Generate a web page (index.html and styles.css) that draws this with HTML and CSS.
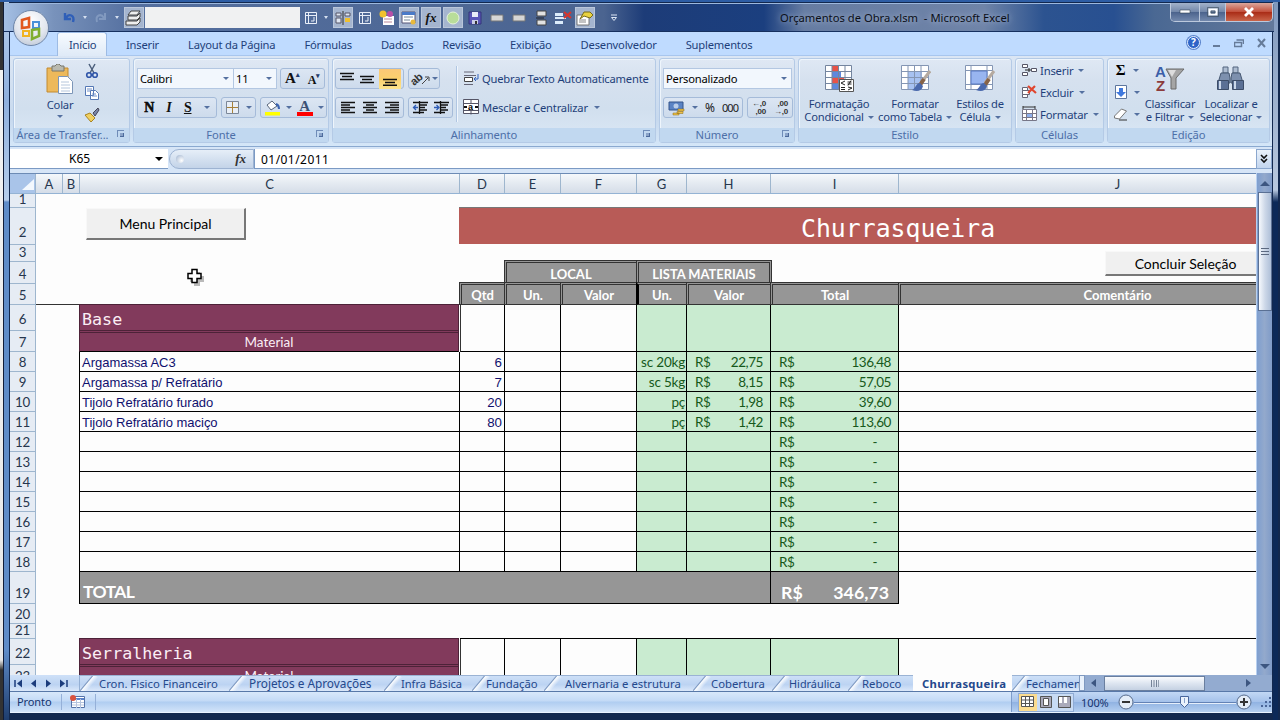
FILE: index.html
```html
<!DOCTYPE html>
<html lang="pt-BR">
<head>
    <meta charset="UTF-8">
    <title>Orçamentos de Obra.xlsm - Microsoft Excel</title>
    <link rel="stylesheet" href="styles.css">
</head>
<body>
<div class="window">
    <!-- Office button -->
    <div class="orb">
        <svg width="26" height="26" viewBox="0 0 26 26" fill="none" stroke-width="2.6">
            <path d="M4 5l7-2v9l-7 1z" stroke="#e2571e"/>
            <path d="M15 7h6v6h-6z" stroke="#4b8fd8" stroke-width="2"/>
            <path d="M5 16h6v5H5z" stroke="#f0b323" stroke-width="2"/>
            <path d="M14 15l7-1v7l-7 3z" stroke="#7fae2f"/>
        </svg>
    </div>

    <div class="titlebar">
        <div class="quick">
            <span class="q undo"><svg width="16" height="16"><path d="M4 3v6h6M5 8c3-5 9-3 7 4" fill="none" stroke="#2f5fb8" stroke-width="2.400"/></svg></span>
            <span class="caret light"></span>
            <span class="q redo"><svg width="16" height="16"><path d="M12 3v6H6M11 8C8 3 2 5 4 12" fill="none" stroke="#8199bf" stroke-width="2"/></svg></span>
            <span class="caret light"></span>
            <span class="q on"><svg width="18" height="16" fill="#eee" stroke="#444"><path d="M6 1h9l-3 4H3zM3 6h9l3-3v4l-3 3H3zM1 11h11l3-3v4l-3 3H1z"/></svg></span>
        </div>
        <div class="blank-box"></div>
        <div class="tools">
            <span class="q"><svg width="16" height="16"><path d="M2.500 2.500h11v11h-11zM2.500 5.500h11M5.500 2.500v11M8 11h3V7" fill="none" stroke="#e8eef8"/></svg></span>
            <span class="caret light"></span>
            <span class="q on"><svg width="16" height="16"><path d="M1 3h5v3H1zM10 3h5v3h-5zM1 8h5v5H1z" fill="#dfe6f2" stroke="#556"/><path d="M10 8h5v4h-5z" fill="#f0c030"/><path d="M8 1v14" stroke="#333"/></svg></span>
            <span class="q"><svg width="16" height="16"><path d="M2.500 2.500h11v11h-11zM2.500 5.500h11M5.500 2.500v11M8 11h3V7" fill="none" stroke="#e8eef8"/></svg></span>
            <span class="q"><svg width="16" height="16"><path d="M4 6h11v9H4z" fill="#fff"/><circle cx="4" cy="4" r="3.500" fill="#f2c22e"/><circle cx="11" cy="4" r="3" fill="#b84fa8"/><path d="M5 9h8M5 12h8" stroke="#b89"/></svg></span>
            <span class="q on"><svg width="16" height="16"><path d="M1 2h13v11H1z" fill="#fff" stroke="#557"/><path d="M1 2h13v3H1z" fill="#4a7ac8"/><path d="M3 7h9M3 10h6" stroke="#789"/><circle cx="12" cy="12" r="2.500" fill="#e8b93c"/></svg></span>
            <span class="q on fx-icon">fx</span>
            <span class="q on"><svg width="16" height="16"><circle cx="8" cy="8" r="6" fill="#b9dd9a" stroke="#e5f3da"/></svg></span>
            <span class="q"><svg width="16" height="16"><path d="M2 2h12v12H2z" fill="#5a55b8" stroke="#34357a"/><path d="M5 2h6v5H5z" fill="#e9ecf8"/><path d="M5 10h6v4H5z" fill="#c9cce6"/><path d="M8 11h2v3H8z" fill="#333"/></svg></span>
            <span class="q"><svg width="16" height="16"><path d="M2 5h12v6H2z" fill="#d6d6d6" stroke="#777"/></svg></span>
            <span class="q"><svg width="16" height="16"><path d="M2 5h12v6H2z" fill="#d6d6d6" stroke="#777"/></svg></span>
            <span class="q"><svg width="16" height="16"><path d="M4 1h9v5H4zM4 10h9v5H4z" fill="#e2e2e2" stroke="#444"/><path d="M3 8h8" stroke="#222"/></svg></span>
            <span class="q"><svg width="18" height="16"><path d="M1 3h8v3H1zM1 7h11v2H1zM1 11h8v3H1z" fill="#dcecfb"/><path d="M10 2l7 6M17 2l-7 6" stroke="#d9342b" stroke-width="2"/></svg></span>
            <span class="q on"><svg width="18" height="16"><path d="M1 5h12v10H1z" fill="#fff" stroke="#777"/><path d="M8 2h6l3 3-3 3-6-2-4 3z" fill="#e9d23f" stroke="#776a1c"/><path d="M3 10h7M3 12h7" stroke="#888"/></svg></span>
        </div>
        <svg class="more" width="8" height="8"><path d="M1 1h6M1.500 3.500h5l-2.500 3z" fill="none" stroke="#dce6f5"/></svg>
        <div class="title">Orçamentos de Obra.xlsm&nbsp; - Microsoft Excel</div>
        <div class="winbtns">
            <span class="wb min"><svg width="12" height="6"><path d="M1 1h10v3H1z" fill="#fff" stroke="#345" stroke-width=".6"/></svg></span>
            <span class="wb max"><svg width="12" height="10"><path d="M2.500 2.500h7v5h-7z" fill="none" stroke="#fff" stroke-width="2.200"/><path d="M.5.5h11v9H.5zM4 4h4v2H4z" fill="none" stroke="#456" stroke-width=".7"/></svg></span>
            <span class="wb close"><svg width="12" height="10"><path d="M2 1l8 8M10 1L2 9" stroke="#fff" stroke-width="2.800"/></svg></span>
        </div>
    </div>

    <div class="tabs">
        <span class="tab active">Início</span>
        <span class="tab">Inserir</span>
        <span class="tab">Layout da Página</span>
        <span class="tab">Fórmulas</span>
        <span class="tab">Dados</span>
        <span class="tab">Revisão</span>
        <span class="tab">Exibição</span>
        <span class="tab">Desenvolvedor</span>
        <span class="tab">Suplementos</span>
        <div class="docbtns">
            <span class="help">?</span>
            <svg width="8" height="12"><path d="M0 9h7" stroke="#667b99" stroke-width="2"/></svg>
            <svg width="10" height="12"><path d="M2.500 3h7v4M.5 5.500h7v4h-7z" fill="none" stroke="#667b99" stroke-width="1.500"/></svg>
            <svg width="10" height="12"><path d="M1 2l7 8M8 2l-7 8" stroke="#667b99" stroke-width="2"/></svg>
        </div>
    </div>

    <div class="ribbon">
        <div class="group g-clip">
            <div class="body">
                <div class="big paste">
                    <svg width="28" height="32"><path d="M1 4h21v24H1z" fill="#edb95b" stroke="#c28a30"/><path d="M6 2h3l2-2h2l2 2h3v5H6z" fill="#b9b9ae" stroke="#77776c"/><path d="M12.500 12.500h9l5 5v12h-14z" fill="#fff" stroke="#7d96b8"/><path d="M15 18h8M15 21h9M15 24h9M15 27h9" stroke="#b5c6dc"/></svg>
                    <span>Colar</span>
                    <i class="caret"></i>
                </div>
                <div class="stack">
                    <svg width="16" height="16"><path d="M5 1l5 9M11 1L6 10" stroke="#4c5f7c" stroke-width="1.500"/><circle cx="5" cy="12" r="2.300" fill="none" stroke="#2f55a8" stroke-width="1.600"/><circle cx="11" cy="12" r="2.300" fill="none" stroke="#2f55a8" stroke-width="1.600"/></svg>
                    <svg width="16" height="16"><path d="M1.500 1.500h8v9h-8zM6.500 5.500h5l3 3v6h-8z" fill="#fff" stroke="#5578b5"/><path d="M3 4h5M3 6h3M8 9h4M8 11h5" stroke="#6e8fc8"/></svg>
                    <svg width="16" height="16"><path d="M9 6l5-5 1 2-4 6z" fill="#7a86a8" stroke="#445"/><path d="M1 8l5-2 5 5-4 4z" fill="#f0d060" stroke="#a98322"/></svg>
                </div>
            </div>
            <div class="label"><span>Área de Transfer...</span><i class="launch"></i></div>
        </div>

        <div class="group g-font">
            <div class="body rows">
                <div class="row">
                    <span class="combo w96">Calibri<i class="caret"></i></span>
                    <span class="combo w42">11<i class="caret"></i></span>
                    <span class="set fsize"><b class="a1">A<sup>&#9652;</sup></b><b class="a2">A<sup>&#9662;</sup></b></span>
                </div>
                <div class="row">
                    <span class="set nis"><b>N</b><em>I</em><u>S</u><i class="caret"></i></span>
                    <span class="set w34"><svg width="15" height="15"><path d="M1.500 1.500h12v12h-12z" fill="#e9eff7" stroke="#7b8798"/><path d="M2 7.500h11M7.500 2v11" stroke="#a8823a"/></svg><i class="caret"></i></span>
                    <span class="set w66">
                        <svg width="17" height="17"><path d="M3 6l5-4 5 5-6 4z" fill="#fff" stroke="#59677c"/><path d="M12 5c3 1 3 4 3 5" stroke="#3c64b0" fill="none" stroke-width="2"/><path d="M1 13h15v3.500H1z" fill="#ff0"/></svg><i class="caret"></i>
                        <span class="fcolor">A</span><i class="caret"></i>
                    </span>
                </div>
            </div>
            <div class="label"><span>Fonte</span><i class="launch"></i></div>
        </div>

        <div class="group g-align">
            <div class="body">
                <div class="rows">
                    <div class="row">
                        <span class="set w68">
                            <svg width="15" height="15"><path d="M1 2.500h14M3 5.500h10M1 8.500h14" stroke="#111" stroke-width="1.500"/></svg>
                            <svg width="15" height="15"><path d="M1 5.500h14M3 8.500h10M1 11.500h14" stroke="#111" stroke-width="1.500"/></svg>
                            <span class="hot"><svg width="15" height="15"><path d="M1 8.500h14M3 11.500h10M1 14.200h14" stroke="#111" stroke-width="1.500"/></svg></span>
                        </span>
                        <span class="set w32"><span class="ab">ab</span><svg class="abarr" width="9" height="12"><path d="M1 11l6-6M4 4h4v4" fill="none" stroke="#444"/></svg><i class="caret"></i></span>
                    </div>
                    <div class="row">
                        <span class="set w68">
                            <svg width="15" height="15"><path d="M1 2.500h14M1 5h9M1 7.500h14M1 10h9M1 12.500h14" stroke="#111" stroke-width="1.300"/></svg>
                            <svg width="15" height="15"><path d="M1 2.500h14M4 5h8M1 7.500h14M4 10h8M1 12.500h14" stroke="#111" stroke-width="1.300"/></svg>
                            <svg width="15" height="15"><path d="M1 2.500h14M6 5h9M1 7.500h14M6 10h9M1 12.500h14" stroke="#111" stroke-width="1.300"/></svg>
                        </span>
                        <span class="set w44">
                            <svg width="16" height="15"><path d="M1 2.500h15M8 5h7M8 7.500h5M8 10h7M1 12.500h11M7.500 1v13" stroke="#111" stroke-width="1.300"/><path d="M6 7.500H2M4 5L1.500 7.500 4 10" fill="none" stroke="#2d5bb5" stroke-width="1.300"/></svg>
                            <svg width="16" height="15"><path d="M1 2.500h15M8 5h7M8 7.500h5M8 10h7M1 12.500h11M7.500 1v13" stroke="#111" stroke-width="1.300"/><path d="M1 7.500h4M3.500 5L6 7.500 3.500 10" fill="none" stroke="#2d5bb5" stroke-width="1.300"/></svg>
                        </span>
                    </div>
                </div>
                <div class="wraps">
                    <div class="line"><svg width="16" height="16"><path d="M1 2h10M1 5.500h12M1 14.500h9" stroke="#667"/><path d="M1.500 7.500h8v4h-8z" fill="#fff" stroke="#444"/><path d="M15 4v5h-3M13 7l-2 2 2 2" fill="none" stroke="#3565bd"/></svg><span>Quebrar Texto Automaticamente</span></div>
                    <div class="line"><svg width="16" height="16"><path d="M.5.5h15v14H.5zM.5 4.500h15M.5 11.500h15M8 .5v4M8 11.500v4" fill="#fff" stroke="#556"/><path d="M1 8h3M12 8h3" stroke="#111" stroke-width="2"/><text x="5" y="10.5" class="cell-a">a</text></svg><span>Mesclar e Centralizar</span><i class="caret"></i></div>
                </div>
            </div>
            <div class="label"><span>Alinhamento</span><i class="launch"></i></div>
        </div>

        <div class="group g-num">
            <div class="body rows">
                <div class="row"><span class="combo w128">Personalizado<i class="caret"></i></span></div>
                <div class="row">
                    <span class="set w80"><svg width="17" height="16"><path d="M1 2h14v8H1z" fill="#5a83c4" stroke="#34548a"/><circle cx="8" cy="6" r="2.500" fill="#b9cdea"/><path d="M10 9h6v2h-6zM9 11.500h6v2H9zM5 13h6v2H5z" fill="#edc248" stroke="#8d6b17" stroke-width=".5"/></svg><i class="caret"></i><span class="pct">%</span><span class="zeros">000</span></span>
                    <span class="set w45"><span class="dec">&#8592;,0<br>,00</span><span class="dec">,00<br>&#8594;,0</span></span>
                </div>
            </div>
            <div class="label"><span>Número</span><i class="launch"></i></div>
        </div>

        <div class="group g-style">
            <div class="body">
                <div class="big w76">
                    <svg width="32" height="30"><path d="M2.500 1.500h26v24h-26z" fill="#fff"/><path d="M9 1h6v6H9zM9 13h12v6H9z" fill="#e85348"/><path d="M9 7h9v6H9zM9 19h8v6H9z" fill="#5e88dd"/><path d="M2.500 1.500h26v24h-26zM9 1v25M15.500 1v25M22 1v25M2 7.500h27M2 13.500h27M2 19.500h27" fill="none" stroke="#74859f"/><path d="M16.500 15.500h14v12h-14z" fill="#fff" stroke="#555"/><path d="M22 17l-4 2 4 2M18 23.500h4M18 25.500h4M24.500 18h4M24.500 20h4M28 16.500l-3 5M25 23l4 1-4 2" fill="none" stroke="#222"/></svg>
                    <span>Formatação</span><span>Condicional<i class="caret"></i></span>
                </div>
                <div class="big w76">
                    <svg width="32" height="30"><path d="M2.500 1.500h27v24h-27z" fill="#fff"/><path d="M9 7h14v18H9z" fill="#a7c2f2"/><path d="M2.500 1.500h27v24h-27zM9 1v25M15.500 1v25M22 1v25M2 7.500h27M2 13.500h27M2 19.500h27" fill="none" stroke="#8496b4"/><path d="M31 7l-9 12" stroke="#b5aaa0" stroke-width="3"/><path d="M25 15l-4 6" stroke="#876347" stroke-width="4"/><path d="M21 19c-4 0-4 5-8 7 5 2 10 1 11-4z" fill="#4a69ad"/></svg>
                    <span>Formatar</span><span>como Tabela<i class="caret"></i></span>
                </div>
                <div class="big w54">
                    <svg width="32" height="30"><path d="M1.500 1.500h27v24h-27z" fill="#fff" stroke="#8496b4"/><path d="M7 1v25M23 1v25M1 6.500h28M1 20.500h28" stroke="#8496b4"/><path d="M7 7h16v13H7z" fill="#98b5f0" stroke="#5878c0"/><path d="M30 7l-9 12" stroke="#b5aaa0" stroke-width="3"/><path d="M25 15l-4 6" stroke="#876347" stroke-width="4"/><path d="M20 19c-4 0-4 5-8 7 5 2 10 1 11-4z" fill="#4a69ad"/></svg>
                    <span>Estilos de</span><span>Célula<i class="caret"></i></span>
                </div>
            </div>
            <div class="label"><span>Estilo</span></div>
        </div>

        <div class="group g-cells">
            <div class="body list">
                <div class="line"><svg width="17" height="16"><path d="M1.500 2.500h5v3h-5zM1.500 10.500h5v3h-5zM10.500 6.500h5v3h-5z" fill="#fff" stroke="#556"/><path d="M4 8h6M8 6v4" stroke="#222"/></svg><span>Inserir</span><i class="caret"></i></div>
                <div class="line"><svg width="17" height="16"><path d="M1.500 3.500h5v3h-5zM1.500 10.500h5v3h-5zM1.500 6.500h7v4h-7z" fill="#fff" stroke="#667"/><path d="M7 2l8 7M14 2L7 9" stroke="#e0452e" stroke-width="2.200"/></svg><span>Excluir</span><i class="caret"></i></div>
                <div class="line"><svg width="17" height="16"><path d="M1.500 3.500h14v11h-14zM1.500 7.500h14M1.500 11.500h14M5.500 3v12M11.500 3v12" fill="#fff" stroke="#778"/><path d="M6 8h5v3H6z" fill="#8fb0ec"/><path d="M2 1h12M2 0v3M14 0v3" stroke="#333"/></svg><span>Formatar</span><i class="caret"></i></div>
            </div>
            <div class="label"><span>Células</span></div>
        </div>

        <div class="group g-edit">
            <div class="body">
                <div class="list edit-list">
                    <div class="line"><span class="sigma">Σ</span><i class="caret"></i></div>
                    <div class="line"><svg width="16" height="16"><path d="M2.500 1.500h11v13h-11z" fill="#fff" stroke="#5c769f"/><path d="M6 4h4v4h3l-5 5-5-5h3z" fill="#3f78dd"/></svg><i class="caret"></i></div>
                    <div class="line"><svg width="16" height="16"><path d="M1.500 10l7-7 5 2-7 8-5-1z" fill="#fff" stroke="#777"/><path d="M6 14h8" stroke="#333"/></svg><i class="caret"></i></div>
                </div>
                <div class="big w58">
                    <svg width="32" height="30"><path d="M12 5h18l-8 9v11h-5V14z" fill="#a5a5a5" stroke="#6b6b6b"/><path d="M14 6h8l-4 7" fill="#ddd"/><text x="1" y="13" class="az" fill="#3c5fa8">A</text><text x="2" y="27" class="az" fill="#8c3b3b">Z</text></svg>
                    <span>Classificar</span><span>e Filtrar<i class="caret"></i></span>
                </div>
                <div class="big w64">
                    <svg width="32" height="30"><path d="M8 3h5v6H8zM18 3h5v6h-5z" fill="#aebdd2" stroke="#53647e"/><path d="M6 9h8l1 5v5H3zM17 9h8l3 10H16v-5z" fill="#7d90ae" stroke="#475872"/><path d="M2.500 16.500h11v9h-11zM17.500 16.500h11v9h-11z" fill="#5b7095" stroke="#3d4d68"/><path d="M5 17v8M20 17v8" stroke="#cbd8ea" stroke-width="2"/></svg>
                    <span>Localizar e</span><span>Selecionar<i class="caret"></i></span>
                </div>
            </div>
            <div class="label"><span>Edição</span></div>
        </div>
    </div>

    <div class="formula">
        <div class="namebox"><span>K65</span><i class="caret black"></i></div>
        <div class="fxarea"><i class="knob"></i><span class="fx">fx</span></div>
        <div class="value">01/01/2011</div>
        <div class="expand"><svg width="8" height="10"><path d="M1 1l3 3 3-3M1 5l3 3 3-3" fill="none" stroke="#111" stroke-width="1.600"/></svg></div>
    </div>

    <div class="main">
        <div class="sheet">
            <div class="r heads">
                <div class="corner"><svg width="16" height="12"><path d="M15 0v11H3z" fill="#f3f8fe"/></svg></div>
                <div>A</div><div>B</div><div>C</div><div>D</div><div>E</div><div>F</div><div>G</div><div>H</div><div>I</div><div class="wide">J</div>
            </div>
            <div class="r h1"><div class="n">1</div></div>
            <div class="r h2"><div class="n">2</div><div class="banner">Churrasqueira</div></div>
            <div class="r h3"><div class="n">3</div></div>
            <div class="r h4"><div class="n">4</div><div class="gh local">LOCAL</div><div class="gh lista">LISTA MATERIAIS</div></div>
            <div class="r h5"><div class="n">5</div><div class="under"></div>
                <div class="gh">Qtd</div><div class="gh">Un.</div><div class="gh">Valor</div><div class="gh thick">Un.</div><div class="gh">Valor</div><div class="gh">Total</div><div class="gh wide">Comentário</div>
            </div>
            <div class="r h6"><div class="n">6</div><div class="sec">Base</div><div class="c first"></div><div class="c"></div><div class="c"></div><div class="c g"></div><div class="c g"></div><div class="c g"></div></div>
            <div class="r h7"><div class="n">7</div><div class="mat">Material</div><div class="c first"></div><div class="c"></div><div class="c"></div><div class="c g"></div><div class="c g"></div><div class="c g"></div><div class="c last"></div></div>
            <div id="items"></div>
            <div class="r h19"><div class="n">19</div><div class="total">TOTAL</div><div class="sum"><span>R$</span><span>346,73</span></div></div>
            <div class="r h20"><div class="n">20</div></div>
            <div class="r h21"><div class="n">21</div><div class="topline"></div></div>
            <div class="r h6"><div class="n">22</div><div class="sec">Serralheria</div><div class="c first"></div><div class="c"></div><div class="c"></div><div class="c g"></div><div class="c g"></div><div class="c g"></div></div>
            <div class="r h7"><div class="n">23</div><div class="mat">Material</div><div class="c first"></div><div class="c"></div><div class="c"></div><div class="c g"></div><div class="c g"></div><div class="c g"></div><div class="c last"></div></div>

            <div class="xl-btn menu">Menu Principal</div>
            <div class="xl-btn done">Concluir Seleção</div>
            <svg class="cursor" width="22" height="22"><path d="M8 5h6v4h4v6h-4v4H8v-4H4V9h4z" fill="#777" opacity=".5"/><path d="M6 2.500h5v4h4v5h-4v4H6v-4H2v-5h4z" fill="#fff" stroke="#000" stroke-width="1.500"/></svg>
        </div>
        <div class="vscroll">
            <i class="up"></i>
            <div class="thumb"><svg width="8" height="7"><path d="M0 .5h8M0 3.500h8M0 6.500h8" stroke="#5b6980"/></svg></div>
            <i class="down"></i>
        </div>
    </div>

    <div class="sheettabs">
        <div class="nav">
            <svg width="10" height="9"><path d="M1 1v7" stroke="#1c3c7c" stroke-width="1.500"/><path d="M8 .5v8l-5-4z" fill="#1c3c7c"/></svg>
            <svg width="10" height="9"><path d="M7 .5v8l-5-4z" fill="#1c3c7c"/></svg>
            <svg width="10" height="9"><path d="M2 .5v8l5-4z" fill="#1c3c7c"/></svg>
            <svg width="10" height="9"><path d="M8 1v7" stroke="#1c3c7c" stroke-width="1.500"/><path d="M1 .5v8l5-4z" fill="#1c3c7c"/></svg>
        </div>
        <div class="st s1">Cron. Fisico Financeiro</div>
        <div class="st s2">Projetos e Aprovações</div>
        <div class="st s3">Infra Básica</div>
        <div class="st s4">Fundação</div>
        <div class="st s5">Alvernaria e estrutura</div>
        <div class="st s6">Cobertura</div>
        <div class="st s7">Hidráulica</div>
        <div class="st s8">Reboco</div>
        <div class="st current">Churrasqueira</div>
        <div class="st s9">Fechamento</div>
        <div class="split"></div>
        <div class="hscroll">
            <i class="left"></i>
            <div class="hthumb"><svg width="8" height="7"><path d="M.5 0v7M3 0v7M5.500 0v7M7.800 0v7" stroke="#5b6980" stroke-width=".8"/></svg></div>
            <i class="right"></i>
        </div>
    </div>

    <div class="status">
        <span class="ready">Pronto</span>
        <span class="macro"><svg width="17" height="14"><path d="M2.500 1.500h13v11h-13z" fill="#fff" stroke="#5573a8"/><path d="M3 4h12" stroke="#5b82c8" stroke-width="2"/><path d="M3 7.500h12M3 10h12M7.500 4v9M11.500 4v9" stroke="#b5c4de"/><circle cx="4" cy="3" r="3" fill="#d8523e"/></svg></span>
        <div class="controls">
            <div class="views">
                <span class="v sel"><svg width="14" height="12"><path d="M.5.5h12v10H.5zM.5 4h12M.5 7.500h12M4.500.5v10M8.500.5v10" fill="#fff" stroke="#555"/></svg></span>
                <span class="v"><svg width="13" height="12"><path d="M.5.5h11v11H.5z" fill="#aab" stroke="#555"/><path d="M3.500 2.500h5v7h-5z" fill="#fff" stroke="#555"/></svg></span>
                <span class="v"><svg width="13" height="12"><path d="M.5.5h12v11H.5z" fill="#aab" stroke="#555"/><path d="M1 1h3v6H1zM6 1h3v6H6z" fill="#fff"/></svg></span>
            </div>
            <span class="zoom">100%</span>
            <svg width="136" height="18">
                <path d="M17 9.500h102" stroke="#6382b5"/><path d="M17 10.500h102" stroke="#e6effb"/>
                <circle cx="9" cy="9" r="7" fill="#e4edf8" stroke="#566b8c"/><path d="M5 9h8" stroke="#333" stroke-width="2"/>
                <circle cx="127" cy="9" r="7" fill="#e4edf8" stroke="#566b8c"/><path d="M123 9h8M127 5v8" stroke="#333" stroke-width="2"/>
                <path d="M63.500 3.500h8v7l-4 4-4-4z" fill="#eaf2fc" stroke="#48669c"/><path d="M67.500 5v5" stroke="#8aa3cc"/>
            </svg>
            <svg class="grip" width="12" height="12"><path d="M9 1h2v2H9zM5 5h2v2H5zM9 5h2v2H9zM1 9h2v2H1zM5 9h2v2H5zM9 9h2v2H9z" fill="#4a6699"/></svg>
        </div>
    </div>
</div>

<script>
    const items = [
        ['Argamassa AC3', '6', 'sc 20kg', '22,75', '136,48'],
        ['Argamassa p/ Refratário', '7', 'sc 5kg', '8,15', '57,05'],
        ['Tijolo Refratário furado', '20', 'pç', '1,98', '39,60'],
        ['Tijolo Refratário maciço', '80', 'pç', '1,42', '113,60']
    ];
    let html = '';
    for (let i = 0; i < 11; i++) {
        const [name, qty, unit, price, total] = items[i] || ['', '', '', '', '-'];
        html += `<div class="r item"><div class="n">${i + 8}</div>
            <div class="c edge"></div><div class="c name">${name}</div><div class="c qty">${qty}</div>
            <div class="c"></div><div class="c"></div><div class="c g unit">${unit}</div>
            <div class="c g money">${price ? `<span>R$</span><span>${price}</span>` : ''}</div>
            <div class="c g money"><span>R$</span><span class="${total === '-' ? 'dash' : ''}">${total}</span></div>
            <div class="c last"></div></div>`;
    }
    document.getElementById('items').innerHTML = html;
</script>
</body>
</html>
```
FILE: styles.css
```css
* {
    box-sizing: border-box;
}
body {
    margin: 0;
    width: 1280px;
    height: 720px;
    overflow: hidden;
    font-family: "Noto Sans", "Open Sans", sans-serif;
    font-size: 11.5px;
    color: #1e3f7a;
    background: #12284e;
}
svg {
    display: block;
    flex: none;
}
.window {
    position: relative;
    width: 1280px;
    height: 720px;
    padding: 3px 8px 0 10px;
    background:
        linear-gradient(#2d5da5, #2d5da5) 0 0 / 100% 2px no-repeat,
        linear-gradient(#101c38, #101c38) 3px 0 / 1px 100% no-repeat,
        linear-gradient(#b7cdea, #8fb0de 100px, #b6cdea 200px, #5f8cc8 202px, #5f8cc8 650px, #1e3d6e) 4px 0 / 5px 100% no-repeat,
        linear-gradient(#7f98bd, #b8c8de 190px, #0c2958 202px, #0c2958) 1273px 0 / 5px 100% no-repeat,
        linear-gradient(#333 70px, #f2f2f2 70px, #e8e8e8 660px, #333 670px) 0 0 / 3px 100% no-repeat,
        #12284e;
}

/* title bar */
.titlebar {
    display: flex;
    align-items: center;
    height: 29px;
    margin: 0 -2px 0 -6px;
    padding-left: 55px;
    border-top: 1px solid #9db8dd;
    border-bottom: 1px solid #16305f;
    background: linear-gradient(90deg, #a4bfe4 0, #7892bb 50px, #546f9f 130px, #4b6490 600px, #1d3c78 640px, #1b3f7f 760px, #667ca2 800px, #6f84a8 980px, #2c5390 1040px, #285091 1110px, #4a6893 1150px, #63799b);
}
.orb {
    position: absolute;
    left: 13px;
    top: 10px;
    z-index: 2;
    width: 36px;
    height: 36px;
    border-radius: 50%;
    border: 1px solid #6f86a8;
    background: radial-gradient(circle at 50% 30%, #fff, #e2e6ee 55%, #b3bfd0);
    display: flex;
    align-items: center;
    justify-content: center;
}
.quick, .tools {
    display: flex;
    align-items: center;
}
.quick .caret {
    margin: 0 4px;
}
.q {
    width: 20px;
    height: 21px;
    margin: 0 1px;
    display: flex;
    align-items: center;
    justify-content: center;
}
.quick .q {
    width: 18px;
}
.q.on {
    background: #a5b5cf;
    border: 1px solid #b9c6da;
}
.quick .q.on {
    width: 20px;
    margin-left: 1px;
}
.fx-icon {
    font: italic bold 13px "Liberation Serif", serif;
    color: #111;
}
.blank-box {
    width: 155px;
    height: 21px;
    background: #f0f1f2;
}
.tools .caret {
    margin: 0 4px 0 2px;
}
.more {
    margin-left: 14px;
}
.title {
    position: absolute;
    left: 780px;
    top: 9px;
    width: 240px;
    color: #0b0f18;
    font-size: 11.2px;
    line-height: 17px;
    white-space: nowrap;
    letter-spacing: 0.02px;
    text-shadow: 0 0 6px #b8c6de;
}
.winbtns {
    position: absolute;
    right: 7px;
    top: 3px;
    display: flex;
    height: 19px;
    border: 1px solid #bcc9dd;
    border-top: 0;
    border-radius: 0 0 5px 5px;
    overflow: hidden;
}
.wb {
    display: flex;
    align-items: center;
    justify-content: center;
    border-right: 1px solid #bcc9dd;
    background: linear-gradient(#a2b2ca, #7388aa 48%, #4a628c 50%, #7288ac);
}
.min {
    width: 29px;
}
.max {
    width: 26px;
}
.close {
    width: 46px;
    border: 0;
    background: linear-gradient(#dba79c, #c3513d 48%, #a92a15 50%, #c9654a);
}

/* ribbon tabs */
.tabs {
    display: flex;
    height: 24px;
    padding-left: 47px;
    background: #bfdbff;
    border-bottom: 1px solid #a8c6ee;
}
.tab {
    height: 24px;
    padding: 0 14.5px;
    line-height: 25px;
    font-size: 11.2px;
    letter-spacing: -0.2px;
    white-space: nowrap;
}
.tab.active {
    padding: 0 10px 0 11px;
    margin-right: 4px;
    background: linear-gradient(#f7fbff, #dfeaf7);
    border: 1px solid #9dbbe4;
    border-bottom: 0;
    border-radius: 3px 3px 0 0;
    line-height: 23px;
}
.docbtns {
    display: flex;
    align-items: center;
    gap: 13px;
    margin-left: auto;
    padding-right: 5px;
    margin-top: -2px;
}
.help {
    width: 13px;
    height: 13px;
    border-radius: 50%;
    background: #2e64c8;
    border: 1px solid #e4efff;
    box-shadow: 0 0 0 1px #5b84cc;
    color: #fff;
    font-size: 10px;
    font-weight: bold;
    line-height: 11px;
    text-align: center;
}

/* ribbon */
.ribbon {
    display: flex;
    gap: 3px;
    height: 91px;
    padding: 2px 2px 3px 3px;
    background: linear-gradient(#dbe6f4, #c7d9ee 70%, #d4e6f8);
    border-bottom: 1px solid #8aa9d0;
    letter-spacing: -0.2px;
}
.group {
    display: flex;
    flex-direction: column;
    height: 85px;
    flex: none;
    border: 1px solid #b4cae6;
    border-radius: 3px;
    background: linear-gradient(#dfe8f4, #d6e1ef 25%, #d1dfee 60%, #dbe8f6);
    box-shadow: inset 1px 1px #eef5fc;
}
.g-clip { width: 117px; }
.g-font { width: 196px; }
.g-align { width: 324px; }
.g-num { width: 136px; }
.g-style { width: 214px; }
.g-cells { width: 89px; }
.g-edit { width: 163px; }
.label {
    position: relative;
    height: 14px;
    line-height: 13px;
    text-align: center;
    color: #4d6fa8;
    background: #c1d8f0;
    font-size: 11.2px;
    letter-spacing: -0.1px;
}
.g-font .label, .g-align .label, .g-num .label {
    padding-right: 20px;
}
.g-clip .label {
    padding-right: 18px;
    white-space: nowrap;
    font-size: 11px;
    letter-spacing: 0;
}
.launch {
    position: absolute;
    right: 5px;
    top: 2px;
    width: 7px;
    height: 7px;
    border-left: 1px solid #6f8cb8;
    border-top: 1px solid #6f8cb8;
}
.launch::after {
    content: "";
    position: absolute;
    right: 0;
    bottom: 0;
    width: 3px;
    height: 3px;
    border-right: 1px solid #4c6a9c;
    border-bottom: 1px solid #4c6a9c;
    background: #8aa3c8;
}
.body {
    display: flex;
    height: 69px;
}
.caret {
    display: inline-block;
    flex: none;
    width: 0;
    height: 0;
    border: 3px solid transparent;
    border-top: 3px solid #5470a0;
    border-bottom: 0;
}
.caret.light {
    border-width: 3px 2.5px 0;
    border-top-color: #d5e0f0;
}
.caret.black {
    border-width: 4px 4px 0;
    border-top-color: #000;
}
.rows {
    display: flex;
    flex-direction: column;
    gap: 8px;
    padding: 9px 0 0 3px;
}
.row {
    display: flex;
    gap: 4px;
    height: 21px;
}
.combo {
    display: flex;
    align-items: center;
    justify-content: space-between;
    height: 21px;
    padding: 0 4px 0 2px;
    border: 1px solid #b3c7e2;
    background: #f2f7fd;
    color: #000;
    font-size: 11.2px;
}
.w96 { width: 97px; margin-right: -5px; }
.w42 { width: 44px; }
.w128 { width: 129px; }
.set {
    display: flex;
    align-items: center;
    justify-content: space-around;
    height: 21px;
    border: 1px solid #a5bbd9;
    border-radius: 3px;
    background: linear-gradient(#dce6f3, #cddbec);
}
.fsize { width: 45px; margin-left: -1px; }
.nis { width: 80px; }
.w34 { width: 35px; }
.w66 { width: 67px; }
.w68 { width: 69px; }
.w32 { width: 32px; }
.w44 { width: 45px; }
.w80 { width: 80px; }
.w45 { width: 46px; }
.g-align .rows {
    padding-left: 2px;
}
.fsize b, .nis {
    font-family: "Liberation Serif", serif;
    color: #111;
}
.fsize sup {
    font-size: 7px;
    line-height: 0;
    color: #223a6a;
    vertical-align: 6px;
}
.a1 { font-size: 15px; }
.a2 { font-size: 12px; padding-top: 3px; }
.nis {
    font-size: 14px;
}
.nis b {
    font-weight: 900;
    -webkit-text-stroke: 0.5px #000;
}
.nis u, .nis em {
    font-weight: bold;
}
.fcolor {
    width: 16px;
    height: 17px;
    border-bottom: 4px solid #f00;
    font: bold 15px/14px "Liberation Serif", serif;
    color: #3c5275;
    text-align: center;
}
.hot {
    height: 20px;
    width: 22px;
    display: flex;
    align-items: center;
    justify-content: center;
    background: linear-gradient(#fbc878, #fbd06d 50%, #fde58e);
}
.ab {
    font: bold 11px "Liberation Sans", sans-serif;
    color: #333;
    transform: rotate(-40deg);
}
.abarr {
    margin-left: -4px;
}
.cell-a {
    font: bold 9px "Liberation Sans", sans-serif;
    fill: #000;
}
.wraps {
    margin: 7px 0 0 3px;
    padding: 4px 0 0 6px;
    height: 56px;
    border-left: 1px solid #b0c6e2;
    box-shadow: inset 1px 0 #f0f6fd;
}
.line {
    display: flex;
    align-items: center;
    gap: 2px;
    height: 16px;
    white-space: nowrap;
}
.wraps .line {
    gap: 3px;
    margin-bottom: 13px;
    font-size: 11.2px;
}
.line .caret {
    margin-left: 3px;
}
.pct {
    font-size: 12px;
    color: #222;
}
.zeros {
    font-size: 11px;
    letter-spacing: -0.8px;
    color: #222;
}
.dec {
    font: bold 8px/8px "Liberation Sans", sans-serif;
    color: #333;
    text-align: right;
}
.big {
    display: flex;
    flex-direction: column;
    align-items: center;
    padding-top: 5px;
    line-height: 13px;
    white-space: nowrap;
    font-size: 11.2px;
}
.big svg {
    margin-bottom: 3px;
}
.big .caret {
    margin: 0 0 2px 4px;
}
.paste {
    width: 92px;
}
.paste .caret {
    margin: 4px 0 0;
}
.paste svg {
    margin-bottom: 2px;
}
.stack {
    display: flex;
    flex-direction: column;
    gap: 6px;
    padding-top: 4px;
    margin-left: -22px;
}
.w76 { width: 78px; margin-left: 1px; }
.w76 + .w76 { width: 74px; margin-left: 0; }
.w54 { width: 56px; }
.list {
    display: flex;
    flex-direction: column;
    gap: 6px;
    padding: 3px 0 0 5px;
    font-size: 11.3px;
}
.edit-list {
    width: 31px;
}
.sigma {
    width: 16px;
    text-align: center;
    font: bold 15px "Liberation Serif", serif;
    color: #000;
}
.w58 { width: 62px; }
.w64 { width: 60px; }
.az {
    font: bold 15px "Liberation Sans", sans-serif;
}

/* formula bar */
.formula {
    display: flex;
    height: 26px;
    padding: 2px 0 4px;
    background: #d6e5f7;
    font-size: 12px;
    color: #000;
}
.namebox {
    display: flex;
    align-items: center;
    width: 158px;
    padding-left: 59px;
    background: #fff;
    border-bottom: 1px solid #7b9ac4;
    font-size: 12px;
}
.namebox .caret {
    margin-left: auto;
    margin-right: 5px;
}
.fxarea {
    display: flex;
    align-items: center;
    justify-content: space-between;
    width: 85px;
    margin: 0 0 0 1px;
    padding: 0 7px 0 6px;
    border-radius: 10px 0 0 10px;
    border: 1px solid #9db3d2;
    background: linear-gradient(#e6eef8, #c3d3e8);
}
.knob {
    width: 8px;
    height: 8px;
    border-radius: 50%;
    background: radial-gradient(circle at 70% 70%, #fff, #9fb3cf);
}
.fx {
    font: italic bold 13px "Liberation Serif", serif;
    color: #333;
}
.value {
    flex: 1;
    padding-left: 6px;
    line-height: 21px;
    letter-spacing: 0.45px;
    background: #fff;
    border-left: 1px solid #7b9ac4;
    border-bottom: 1px solid #7b9ac4;
}
.expand {
    width: 16px;
    display: flex;
    align-items: center;
    justify-content: center;
    border: 1px solid #8ba7ce;
    background: linear-gradient(#eaf2fb, #c2d5ee);
}

/* sheet */
.main {
    display: flex;
    height: 502px;
}
.sheet {
    position: relative;
    width: 1246px;
    height: 502px;
    overflow: hidden;
    background: #fdfdfd;
    border-top: 1px solid #6c8bb5;
    font-family: Lato, "Open Sans", sans-serif;
    font-size: 13.5px;
    color: #000;
}
.r {
    display: grid;
    grid-template-columns: 26px 27px 17px 380px 45px 56px 76px 50px 84px 128px 357px;
    grid-template-rows: 100%;
}
.heads {
    height: 20px;
    line-height: 20px;
    text-align: center;
    font-size: 13px;
    color: #26364d;
    background: linear-gradient(#f5f8fb, #e4eaf1 50%, #d5dde8);
    border-bottom: 1px solid #94b3d4;
}
.heads div {
    border-right: 1px solid #9eb6ce;
}
.heads .corner {
    padding: 5px 0 0 9px;
    background: #a9c4e9;
}
.r .wide {
    padding-left: 80px;
    border-right: 0;
}
.n {
    grid-column: 1;
    display: flex;
    align-items: flex-end;
    justify-content: center;
    line-height: 17px;
    font-size: 13.3px;
    letter-spacing: -0.3px;
    color: #26364d;
    background: #e6ecf4;
    border-right: 1px solid #9eb6ce;
    border-bottom: 1px solid #9eb6ce;
}
.h1 { height: 14px; }
.h1 .n { line-height: 16px; }
.h2 { height: 37px; }
.h2 .n { padding-bottom: 3px; }
.h3 { height: 17px; }
.h3 .n { line-height: 17px; }
.h4 { height: 22px; }
.h5 { height: 21px; }
.h6 { height: 26px; }
.h6 .n { padding-bottom: 2px; }
.h7 { height: 21px; }
.item { height: 20px; }
.h19 { height: 32px; }
.h19 .n { padding-bottom: 1px; }
.h20 { height: 20px; }
.h21 { height: 15px; }
.h21 .n { line-height: 16px; }
.banner {
    grid-column: 5 / 12;
    margin: -1px 0 1px -1px;
    padding-left: 342px;
    border-top: 1px solid #777;
    background: #b85b57;
    color: #fff;
    font: 24.8px/41px "DejaVu Sans Mono", monospace;
}
.gh {
    margin: -2px 0 0 -1px;
    text-align: center;
    font-weight: bold;
    font-size: 13px;
    line-height: 22px;
    color: #fff;
    background: #969696;
    border-top: 3px double #333;
    border-left: 3px double #333;
}
.local {
    grid-column: 6 / 8;
    padding-right: 2px;
}
.lista {
    grid-column: 8 / 10;
    border-right: 3px double #333;
    margin-right: -1px;
    font-size: 12.9px;
}
.h5 .gh {
    padding-right: 2px;
    line-height: 20px;
    border-bottom: 1px solid #333;
}
.h5 .thick {
    border-left: 3px solid #000;
}
.under {
    grid-column: 2 / 5;
    border-bottom: 1px solid #333;
}
.c {
    min-width: 0;
    border-right: 1px solid #000;
}
.c.last {
    border-right: 0;
}
.sec {
    grid-column: 4;
    margin: -1px 1px 0 -1px;
    padding-left: 2px;
    background: #823a5c;
    color: #fbeef5;
    border: 1px solid #4d2238;
    border-bottom: 0;
    font: 16.7px/28px "DejaVu Sans Mono", monospace;
}
.mat {
    grid-column: 4;
    margin: -1px 1px 0 -1px;
    background: #823a5c;
    color: #fbeef5;
    border: 1px solid #4d2238;
    border-top: 3px double #4d2238;
    border-bottom-color: #000;
    text-align: center;
    line-height: 18px;
}
.h7 .c {
    border-bottom: 1px solid #000;
}
.first {
    border-left: 1px solid #333;
}
.g {
    background: #c9ebd0;
    color: #16591b;
}
.item .c {
    border-bottom: 1px solid #000;
    line-height: 21px;
    white-space: nowrap;
    overflow: hidden;
}
.item .edge {
    grid-column: 3;
    border-bottom: 0;
}
.item .name {
    padding-left: 2px;
    font: 13px/22px "Liberation Sans", Arial, sans-serif;
    letter-spacing: -0.02px;
    color: #10106e;
}
.item .qty {
    padding-right: 2px;
    text-align: right;
    font: 13.3px/22px "Liberation Sans", Arial, sans-serif;
    color: #10106e;
}
.unit {
    text-align: right;
    padding-right: 1px;
    letter-spacing: -0.2px;
}
.money {
    display: flex;
    justify-content: space-between;
    padding: 0 7px 0 8px;
    letter-spacing: -0.45px;
}
.dash {
    padding-right: 14px;
}
.total {
    grid-column: 4 / 10;
    margin-left: -1px;
    padding-left: 3px;
    background: #969696;
    border: 1px solid #000;
    border-top: 0;
    color: #fff;
    font-size: 17.5px;
    letter-spacing: -0.6px;
    font-weight: bold;
    line-height: 40px;
}
.sum {
    display: flex;
    justify-content: space-between;
    padding: 0 9px 0 10px;
    background: #969696;
    border-right: 1px solid #000;
    border-bottom: 1px solid #000;
    color: #fff;
    font-size: 17.8px;
    font-weight: bold;
    line-height: 40px;
}
.topline {
    grid-column: 5 / 12;
    border-bottom: 1px solid #000;
}
.xl-btn {
    position: absolute;
    display: flex;
    align-items: center;
    justify-content: center;
    background: #f0f0f0;
    border: 1px solid #f8f8f8;
    border-right: 2px solid #777;
    border-bottom: 2px solid #777;
    font-size: 14px;
}
.menu {
    left: 76px;
    top: 34px;
    width: 160px;
    height: 32px;
}
.done {
    left: 1095px;
    top: 77px;
    width: 151px;
    height: 25px;
    padding-left: 9px;
    border-right: 0;
}
.cursor {
    position: absolute;
    left: 176px;
    top: 93px;
}
.vscroll {
    display: flex;
    flex-direction: column;
    align-items: center;
    width: 16px;
    border-left: 1px solid #b8d0f0;
    background: linear-gradient(90deg, #7f9fcf, #93a9cc 50%, #7f9bc8);
}
.up {
    margin: 8px 0 6px;
    border: 5px solid transparent;
    border-top: 0;
    border-bottom: 5px solid #3d5680;
}
.thumb {
    width: 14px;
    height: 119px;
    border: 1px solid #5a7094;
    background: linear-gradient(90deg, #f6f9fd, #cdd8e8 50%, #aebfd8);
    display: flex;
    align-items: center;
    justify-content: center;
}
.down {
    margin: auto 0 6px;
    border: 5px solid transparent;
    border-bottom: 0;
    border-top: 5px solid #3d5680;
}

/* sheet tabs */
.sheettabs {
    display: flex;
    height: 17px;
    background: linear-gradient(#cfe1f8, #bcd3f2 60%, #dbe8fa);
    border-bottom: 1px solid #5878a8;
    line-height: 15px;
    color: #24488c;
}
.nav {
    display: flex;
    align-items: center;
    gap: 5px;
    width: 70px;
    flex: none;
    padding-left: 4px;
    border-right: 1px solid #94afd4;
}
.st {
    position: relative;
    flex: none;
    padding-left: 19px;
    white-space: nowrap;
    border-top: 1px solid #9bb3d4;
    font-size: 11.3px;
    overflow: hidden;
}
.st::before {
    content: "";
    position: absolute;
    left: 6px;
    top: -3px;
    width: 5px;
    height: 22px;
    border-left: 1px solid #7f99c0;
    background: linear-gradient(90deg, #fff, transparent);
    transform: rotate(40deg);
}
.s1 { width: 149px; }
.s2 { width: 155px; padding-left: 20px; font-size: 11.8px; }
.s3 { width: 88px; padding-left: 17px; font-size: 11.1px; }
.s4 { width: 72px; padding-left: 14px; }
.s5 { width: 149px; padding-left: 21px; }
.s6 { width: 79px; padding-left: 18px; }
.s7 { width: 76px; padding-left: 17px; font-size: 10.9px; }
.s8 { width: 65px; padding-left: 14px; }
.s9 { width: 67px; padding-left: 14px; }
.current {
    width: 99px;
    padding-left: 9px;
    background: #fdfdfd;
    border-top-color: #fdfdfd;
    font-weight: bold;
    letter-spacing: 0.3px;
}
.current::before {
    display: none;
}
.split {
    width: 6px;
    border: 1px solid #7f99c0;
    background: #e9f1fb;
}
.hscroll {
    flex: 1;
    display: flex;
    align-items: center;
    background: #93abd0;
    padding: 0 21px 0 6px;
}
.left {
    border: 4px solid transparent;
    border-left: 0;
    border-right: 5px solid #3d5680;
    margin-right: 8px;
}
.hthumb {
    width: 101px;
    height: 15px;
    border: 1px solid #6a7f9f;
    background: linear-gradient(#fbfcfe, #dde5f0 50%, #c5d1e2);
    display: flex;
    align-items: center;
    justify-content: center;
}
.right {
    border: 4px solid transparent;
    border-right: 0;
    border-left: 5px solid #3d5680;
    margin-left: auto;
}

/* status bar */
.status {
    display: flex;
    align-items: center;
    height: 21px;
    background: linear-gradient(#d8e8fb, #c3daf6 45%, #b0cdf1 50%, #d3e4f9);
    border-bottom: 1px solid #e9f3ff;
    color: #14336e;
    font-size: 11px;
    letter-spacing: -0.1px;
}
.ready {
    width: 52px;
    height: 16px;
    line-height: 16px;
    padding-left: 7px;
    border-right: 1px solid #95b0d8;
}
.macro {
    width: 34px;
    height: 16px;
    padding: 1px 0 0 7px;
    border-right: 1px solid #95b0d8;
}
.controls {
    display: flex;
    align-items: center;
    height: 20px;
    margin-left: auto;
    padding-left: 6px;
    border-left: 1px solid #7d9cca;
    background: linear-gradient(#c2d8f5, #a4c1ea 50%, #91b3e2 52%, #b5cff0);
}
.views {
    display: flex;
    border: 1px solid #8fabd4;
}
.v {
    width: 18px;
    height: 17px;
    display: flex;
    align-items: center;
    justify-content: center;
    background: #c8dbf4;
}
.v.sel {
    background: #fbdc90;
}
.zoom {
    width: 36px;
    margin-left: 7px;
}
.grip {
    margin-left: 7px;
}
```
